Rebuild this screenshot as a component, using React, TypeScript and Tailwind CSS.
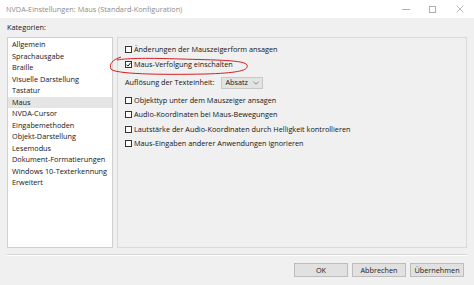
import React from 'react';

const categories = [
  'Allgemein',
  'Sprachausgabe',
  'Braille',
  'Visuelle Darstellung',
  'Tastatur',
  'Maus',
  'NVDA-Cursor',
  'Eingabemethoden',
  'Objekt-Darstellung',
  'Lesemodus',
  'Dokument-Formatierungen',
  'Windows 10-Texterkennung',
  'Erweitert',
];

function Box({ checked = false }: { checked?: boolean }) {
  return (
    <span className="flex h-[7px] w-[7px] shrink-0 items-center justify-center border border-[#333] bg-white">
      {checked && (
        <svg width="5" height="5" viewBox="0 0 5 5" className="block">
          <path d="M0.4 2.6 L1.9 4.1 L4.7 0.8" fill="none" stroke="#111" strokeWidth="1" />
        </svg>
      )}
    </span>
  );
}

function Check({ label, checked, h = 'h-[15px]' }: { label: string; checked?: boolean; h?: string }) {
  return (
    <div className={`flex items-center gap-[2px] ${h}`}>
      <Box checked={checked} />
      <span className="whitespace-nowrap">{label}</span>
    </div>
  );
}

function Btn({ label }: { label: string }) {
  return (
    <button className="flex h-[14px] w-[54px] items-center justify-center border border-[#bdbdbd] bg-[#e1e1e1] text-[#222]">
      {label}
    </button>
  );
}

export default function App() {
  return (
    <div
      className="relative flex h-[285px] w-[474px] flex-col overflow-hidden bg-[#f0f0f0] text-[7.3px] text-[#141414]"
      style={{ fontFamily: '"Open Sans", "Noto Sans", sans-serif' }}
    >
      {/* title bar */}
      <div className="flex h-[18px] items-center bg-white pl-[6px] text-[#8c8c8c]">
        <span className="flex-1">NVDA-Einstellungen: Maus (Standard-Konfiguration)</span>
        <div className="flex items-center">
          <span className="flex w-[27px] justify-center">
            <span className="block h-px w-[8px] bg-[#b0b0b0]" />
          </span>
          <span className="flex w-[27px] justify-center">
            <span className="block h-[7px] w-[7px] border border-[#b0b0b0]" />
          </span>
          <span className="flex w-[28px] justify-center">
            <svg width="8" height="8" viewBox="0 0 8 8">
              <path d="M0.5 0.5 L7.5 7.5 M7.5 0.5 L0.5 7.5" stroke="#aaa" strokeWidth="0.8" />
            </svg>
          </span>
        </div>
      </div>

      <div className="flex flex-1 flex-col px-[7px]">
        <div className="flex h-[19px] items-center">Kategorien:</div>

        <div className="flex h-[211px] gap-[4px]">
          <div className="w-[106px] border border-[#cfcfcf] bg-white pt-px">
            {categories.map((c) => (
              <div
                key={c}
                className={`h-[11.5px] whitespace-nowrap pl-[4px] leading-[11.5px] ${c === 'Maus' ? 'bg-[#e5e5e5]' : ''}`}
              >
                {c}
              </div>
            ))}
          </div>

          <div className="flex-1 border border-[#d9d9d9] pl-[7px] pt-[4px]">
            <Check label="Änderungen der Mauszeigerform ansagen" />
            <Check label="Maus-Verfolgung einschalten" checked />
            <div className="flex h-[21px] items-center">
              <span>Auflösung der Texteinheit:</span>
              <div className="ml-[7px] flex h-[12px] w-[42px] items-center justify-between border border-[#c8c8c8] bg-[#e3e3e3] pl-[3px] pr-[3px]">
                <span className="font-medium">Absatz</span>
                <svg width="6" height="4" viewBox="0 0 6 4">
                  <path d="M0.5 0.8 L3 3.2 L5.5 0.8" fill="none" stroke="#777" strokeWidth="0.8" />
                </svg>
              </div>
            </div>
            <Check label="Objekttyp unter dem Mauszeiger ansagen" h="h-[14.5px]" />
            <Check label="Audio-Koordinaten bei Maus-Bewegungen" h="h-[14.5px]" />
            <Check label="Lautstärke der Audio-Koordinaten durch Helligkeit kontrollieren" h="h-[14.5px]" />
            <Check label="Maus-Eingaben anderer Anwendungen ignorieren" h="h-[14.5px]" />
          </div>
        </div>

        <div className="mt-[6px] border-t border-b border-t-[#d5d5d5] border-b-white" />

        <div className="flex justify-end gap-[4px] pr-[3px] pt-[7px]">
          <Btn label="OK" />
          <Btn label="Abbrechen" />
          <Btn label="Übernehmen" />
        </div>
      </div>

      {/* red hand-drawn ellipse annotation */}
      <svg
        className="pointer-events-none absolute left-0 top-0"
        width="474"
        height="285"
        viewBox="0 0 474 285"
      >
        <path
          d="M121 57 C 112 60, 109 64, 111 69 C 114 74, 160 75, 205 74 C 240 73, 249 70, 247 65 C 245 60, 215 60, 180 59 C 150 58, 128 58, 117 60"
          fill="none"
          stroke="#d42020"
          strokeWidth="1"
        />
      </svg>
    </div>
  );
}
